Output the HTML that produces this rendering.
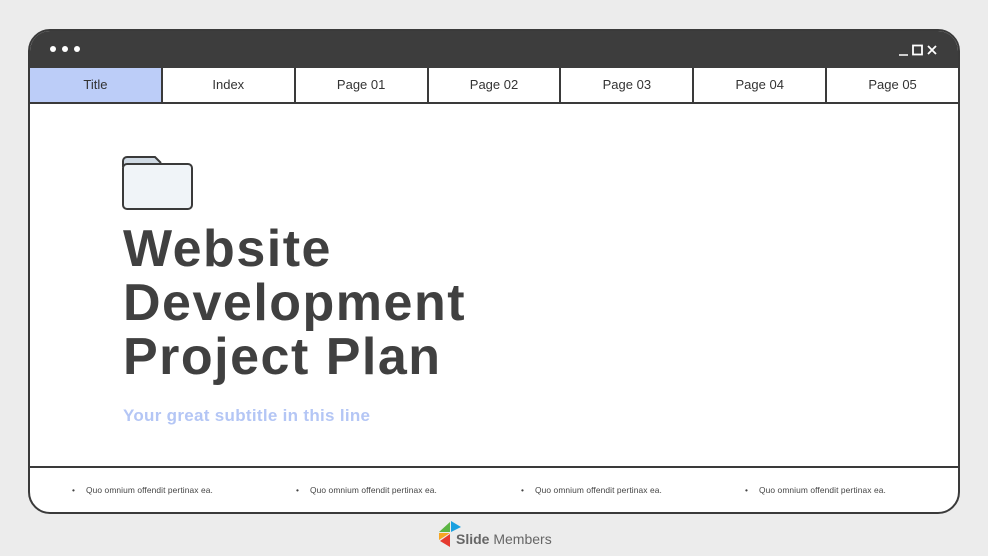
<!DOCTYPE html>
<html><head><style>
body{margin:0;width:988px;height:556px;background:#ececec;font-family:"Liberation Sans",sans-serif;position:relative;overflow:hidden}
.win{position:absolute;left:28px;top:29px;width:928px;height:481px;border:2px solid #3a3a3a;border-radius:22px;background:#fff;overflow:hidden}
.bar{position:absolute;left:-2px;top:-2px;width:940px;height:39px;background:#3d3d3d}
.dot{position:absolute;top:17px;width:6px;height:6px;border-radius:50%;background:#fff}
.tabs{position:absolute;left:0;top:37px;width:100%;height:34px;border-bottom:2px solid #3a3a3a;display:flex}
.tab{flex:1;border-right:2px solid #3a3a3a;font-size:13px;color:#333;text-align:center;line-height:34px}
.tab:last-child{border-right:none}
.foot{position:absolute;left:0;top:435px;width:100%;border-top:2px solid #3a3a3a;height:46px}
.b{position:absolute;top:17px;font-size:8.4px;color:#444;letter-spacing:0.1px}
.b:before{content:"•";position:absolute;left:-14px}
h1{position:absolute;left:93px;top:191px;margin:0;font-size:52px;line-height:54px;color:#404040;font-weight:bold;letter-spacing:1.5px}
.sub{position:absolute;left:93px;top:375px;font-size:17px;color:#b4c6f5;font-weight:bold;letter-spacing:0.3px}
</style></head><body>
<div class="win">
<div class="bar">
<div class="dot" style="left:22px"></div><div class="dot" style="left:34px"></div><div class="dot" style="left:46px"></div>
<svg style="position:absolute;left:870px;top:15px" width="44" height="12" viewBox="0 0 44 12"><path d="M1 11h9" stroke="#fff" stroke-width="1.6"/><rect x="15" y="1.5" width="9" height="9" fill="none" stroke="#fff" stroke-width="1.8"/><path d="M30 2l8 8M38 2l-8 8" stroke="#fff" stroke-width="1.8"/></svg>
</div>
<div class="tabs">
<div class="tab" style="background:#bccdf8">Title</div><div class="tab">Index</div><div class="tab">Page 01</div><div class="tab">Page 02</div><div class="tab">Page 03</div><div class="tab">Page 04</div><div class="tab">Page 05</div>
</div>
<svg style="position:absolute;left:91px;top:124px" width="74" height="56" viewBox="0 0 74 56"><path d="M2 12V6a4 4 0 0 1 4-4h28l6 6" fill="#cfd9e3" stroke="#3a3a3a" stroke-width="2"/><rect x="2" y="9" width="69" height="45" rx="4" fill="#f0f4f8" stroke="#3a3a3a" stroke-width="2"/></svg>
<h1>Website<br>Development<br>Project Plan</h1>
<div class="sub">Your great subtitle in this line</div>
<div class="foot">
<div class="b" style="left:56px">Quo omnium offendit pertinax ea.</div>
<div class="b" style="left:280px">Quo omnium offendit pertinax ea.</div>
<div class="b" style="left:505px">Quo omnium offendit pertinax ea.</div>
<div class="b" style="left:729px">Quo omnium offendit pertinax ea.</div>
</div>
</div>
<svg style="position:absolute;left:438px;top:520px" width="24" height="28" viewBox="0 0 24 28"><path d="M12 2L1 12h11z" fill="#5bb543"/><path d="M13 1v11l10-5z" fill="#1aa0e0"/><path d="M1 13h11L1 20z" fill="#f5a623"/><path d="M12 14v13L2 21z" fill="#e53a2f"/></svg>
<div style="position:absolute;left:456px;top:531px;font-size:14px;color:#666"><b>Slide</b> Members</div>
</body></html>
